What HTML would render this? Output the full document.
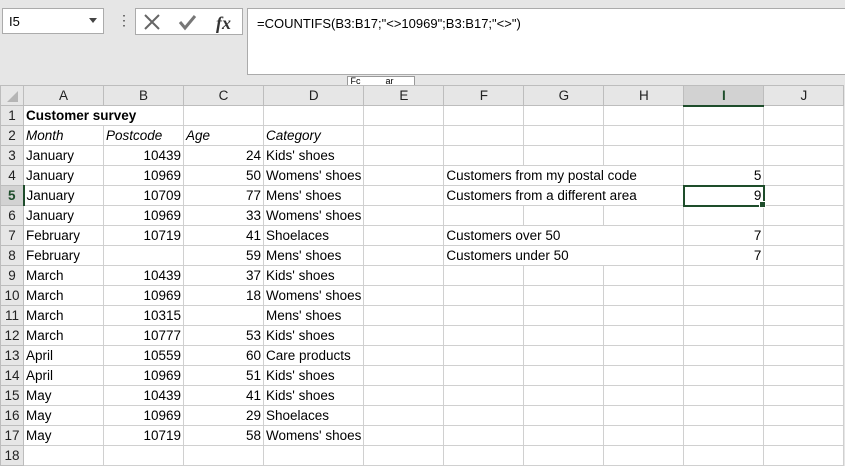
<!DOCTYPE html><html><head><style>
body{margin:0;width:845px;height:466px;overflow:hidden;background:#e6e6e6;font-family:"Liberation Sans",sans-serif;position:relative}
.box{position:absolute;background:#fff;border:1px solid #ababab;box-sizing:border-box}
table{position:absolute;left:0;top:85px;border-collapse:collapse;table-layout:fixed;background:#fff;font-size:13.5px}
td{border:1px solid #d0d0d0;height:20px;padding:0 2px;white-space:nowrap;overflow:visible;box-sizing:border-box;color:#000}
tr.h td{background:#e6e6e6;text-align:center;border-color:#bdbdbd;height:20px;color:#222}
td.r{background:#e6e6e6;text-align:center;border-color:#bdbdbd;color:#222;padding:0}
.n{text-align:right}.b{font-weight:bold}.i{font-style:italic}
.sel{outline:2px solid #1e4d2b;outline-offset:-1px}
</style></head><body>
<div class="box" style="left:2px;top:8px;width:102px;height:26px;font-size:13px;padding:5px 6px">I5<span style="position:absolute;right:6px;top:9px;border:4px solid transparent;border-top:5px solid #444"></span></div>
<div style="position:absolute;left:117px;top:12px;font-size:14px;color:#444">⋮</div>
<div class="box" style="left:135px;top:8px;width:108px;height:27px">
<svg width="108" height="27" style="position:absolute;left:0;top:0"><path d="M9 6 L23 20 M23 6 L9 20" stroke="#666" stroke-width="2"/><path d="M44 13 L49 19 L59 7" stroke="#777" stroke-width="3" fill="none"/><text x="80" y="20" font-family="Liberation Serif" font-style="italic" font-weight="bold" font-size="18" fill="#333">fx</text></svg></div>
<div class="box" style="left:247px;top:8px;width:600px;height:67px;font-size:13px;padding:7px 9px">=COUNTIFS(B3:B17;"&lt;&gt;10969";B3:B17;"&lt;&gt;")</div>
<div style="position:absolute;left:347px;top:76px;width:66px;height:9px;background:#fff;border:1px solid #999;font-size:9px;line-height:9px;overflow:hidden">&nbsp;Fc&nbsp;&nbsp;&nbsp;&nbsp;&nbsp;&nbsp;&nbsp;&nbsp;&nbsp;&nbsp;ar</div>
<table>
<colgroup><col style="width:23px"><col style="width:80px"><col style="width:80px"><col style="width:80px"><col style="width:100px"><col style="width:80px"><col style="width:80px"><col style="width:80px"><col style="width:80px"><col style="width:80px"><col style="width:80px"></colgroup>
<tr class="h"><td><svg width="14" height="14" style="vertical-align:middle"><path d="M13 2 L13 13 L2 13Z" fill="#b5b5b5"/></svg></td><td>A</td><td>B</td><td>C</td><td>D</td><td>E</td><td>F</td><td>G</td><td>H</td><td style="background:#d2d2d2;border-bottom:2px solid #1e4d2b;font-weight:bold;color:#1e4d2b">I</td><td>J</td></tr>
<tr><td class="r">1</td><td class="b" colspan="2">Customer survey</td><td></td><td></td><td></td><td></td><td></td><td></td><td></td><td></td></tr>
<tr><td class="r">2</td><td class="i">Month</td><td class="i">Postcode</td><td class="i">Age</td><td class="i">Category</td><td></td><td></td><td></td><td></td><td></td><td></td></tr>
<tr><td class="r">3</td><td>January</td><td class="n">10439</td><td class="n">24</td><td>Kids' shoes</td><td></td><td></td><td></td><td></td><td></td><td></td></tr>
<tr><td class="r">4</td><td>January</td><td class="n">10969</td><td class="n">50</td><td>Womens' shoes</td><td></td><td colspan="3">Customers from my postal code</td><td class="n">5</td><td></td></tr>
<tr><td class="r" style="background:#d2d2d2;border-right:2px solid #1e4d2b;font-weight:bold;color:#1e4d2b">5</td><td>January</td><td class="n">10709</td><td class="n">77</td><td>Mens' shoes</td><td></td><td colspan="3">Customers from a different area</td><td class="n sel" style="position:relative">9<span style="position:absolute;right:-3px;bottom:-3px;width:5px;height:5px;background:#1e4d2b;border:1px solid #fff"></span></td><td></td></tr>
<tr><td class="r">6</td><td>January</td><td class="n">10969</td><td class="n">33</td><td>Womens' shoes</td><td></td><td></td><td></td><td></td><td></td><td></td></tr>
<tr><td class="r">7</td><td>February</td><td class="n">10719</td><td class="n">41</td><td>Shoelaces</td><td></td><td colspan="3">Customers over 50</td><td class="n">7</td><td></td></tr>
<tr><td class="r">8</td><td>February</td><td class="n"></td><td class="n">59</td><td>Mens' shoes</td><td></td><td colspan="3">Customers under 50</td><td class="n">7</td><td></td></tr>
<tr><td class="r">9</td><td>March</td><td class="n">10439</td><td class="n">37</td><td>Kids' shoes</td><td></td><td></td><td></td><td></td><td></td><td></td></tr>
<tr><td class="r">10</td><td>March</td><td class="n">10969</td><td class="n">18</td><td>Womens' shoes</td><td></td><td></td><td></td><td></td><td></td><td></td></tr>
<tr><td class="r">11</td><td>March</td><td class="n">10315</td><td class="n"></td><td>Mens' shoes</td><td></td><td></td><td></td><td></td><td></td><td></td></tr>
<tr><td class="r">12</td><td>March</td><td class="n">10777</td><td class="n">53</td><td>Kids' shoes</td><td></td><td></td><td></td><td></td><td></td><td></td></tr>
<tr><td class="r">13</td><td>April</td><td class="n">10559</td><td class="n">60</td><td>Care products</td><td></td><td></td><td></td><td></td><td></td><td></td></tr>
<tr><td class="r">14</td><td>April</td><td class="n">10969</td><td class="n">51</td><td>Kids' shoes</td><td></td><td></td><td></td><td></td><td></td><td></td></tr>
<tr><td class="r">15</td><td>May</td><td class="n">10439</td><td class="n">41</td><td>Kids' shoes</td><td></td><td></td><td></td><td></td><td></td><td></td></tr>
<tr><td class="r">16</td><td>May</td><td class="n">10969</td><td class="n">29</td><td>Shoelaces</td><td></td><td></td><td></td><td></td><td></td><td></td></tr>
<tr><td class="r">17</td><td>May</td><td class="n">10719</td><td class="n">58</td><td>Womens' shoes</td><td></td><td></td><td></td><td></td><td></td><td></td></tr>
<tr><td class="r">18</td><td></td><td></td><td></td><td></td><td></td><td></td><td></td><td></td><td></td><td></td></tr>
</table>
</body></html>
